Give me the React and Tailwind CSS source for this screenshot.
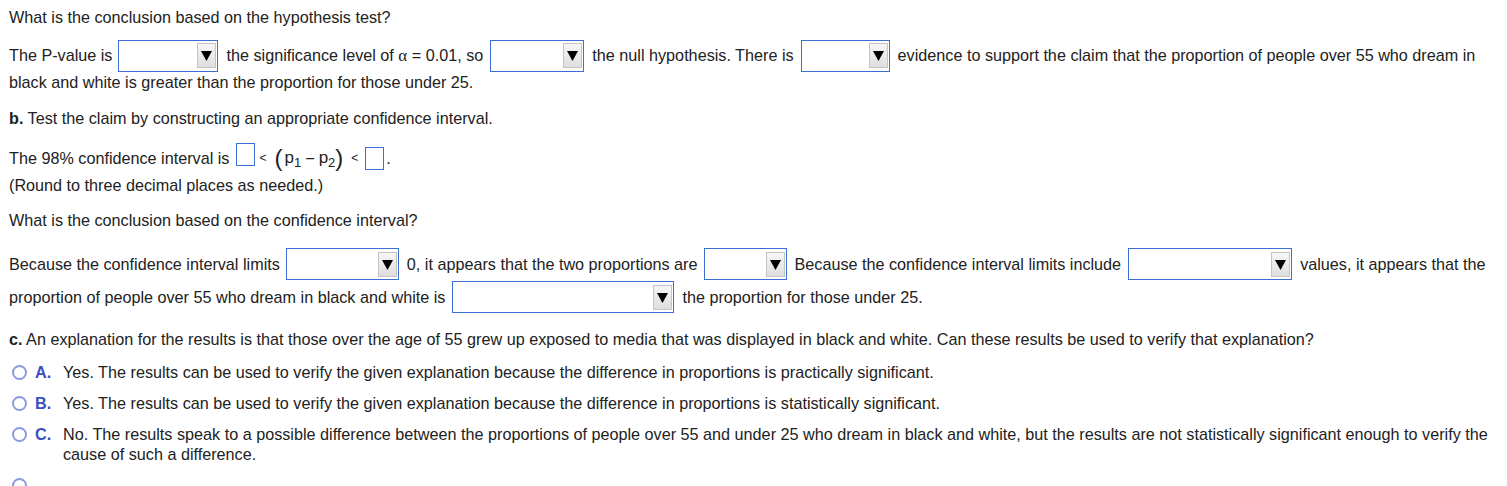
import React from 'react';

const Dropdown = ({ className = '' }) => (
  <span
    className={`relative inline-flex h-[32px] shrink-0 items-center justify-end border border-[#3b6fd4] bg-white pr-[1px] ${className}`}
  >
    <span className="flex h-[25px] w-[19px] items-center justify-center border border-[#c4c4c4] bg-gradient-to-b from-[#f6f6f6] to-[#dedede]">
      <svg width="11" height="11" viewBox="0 0 11 11">
        <polygon points="0,1 11,1 5.5,11" fill="#000" />
      </svg>
    </span>
  </span>
);

const AnswerBox = () => (
  <span className="inline-block h-[23px] w-[19px] shrink-0 border border-[#3b6fd4] bg-white" />
);

const Radio = () => (
  <span className="ml-[3px] mt-[3px] h-[15px] w-[15px] shrink-0 rounded-full border-2 border-[#8d9bdc] bg-white" />
);

const Option = ({ letter, children }) => (
  <div className="flex items-start leading-5">
    <Radio />
    <span className="ml-[8px] w-[28px] shrink-0 font-bold text-[#3c4fc2]">{letter}</span>
    <span>{children}</span>
  </div>
);

export default function App() {
  return (
    <div
      className="h-[486px] overflow-hidden bg-white pl-[9px] pt-[7px] text-[16.2px] text-[#222]"
      style={{ fontFamily: '"Liberation Sans", Arial, sans-serif' }}
    >
      <p className="leading-5">What is the conclusion based on the hypothesis test?</p>

      {/* hypothesis test conclusion */}
      <div className="mt-[12px] flex h-[33px] items-center whitespace-nowrap">
        <span>The P-value is</span>
        <Dropdown className="ml-[6px] mr-[8px] w-[100px]" />
        <span>
          the significance level of{' '}
          <span className="text-[17px]" style={{ fontFamily: '"Liberation Serif", serif' }}>α</span>
          {' '}= 0.01, so
        </span>
        <Dropdown className="ml-[7px] mr-[8px] w-[94px]" />
        <span>the null hypothesis. There is</span>
        <Dropdown className="ml-[7px] mr-[8px] w-[89px]" />
        <span>evidence to support the claim that the proportion of people over 55 who dream in</span>
      </div>
      <p className="whitespace-nowrap leading-5">black and white is greater than the proportion for those under 25.</p>

      <p className="mt-[16px] leading-5">
        <b>b.</b> Test the claim by constructing an appropriate confidence interval.
      </p>

      {/* confidence interval */}
      <div className="mt-[17px] flex h-[26px] items-center whitespace-nowrap">
        <span>The 98% confidence interval is</span>
        <span className="ml-[7px]"><AnswerBox /></span>
        <span className="ml-[4px] text-[12px]">&lt;</span>
        <span className="ml-[8px] flex items-center">
          <span className="text-[24px] leading-none">(</span>
          <span className="ml-[2px] text-[17px]">p<sub className="text-[13px]">1</sub></span>
          <span className="mx-[4px]">−</span>
          <span className="text-[17px]">p<sub className="text-[13px]">2</sub></span>
          <span className="text-[24px] leading-none">)</span>
        </span>
        <span className="ml-[8px] mr-[7px] text-[12px]">&lt;</span>
        <AnswerBox />
        <span className="ml-[2px]">.</span>
      </div>
      <p className="mt-[4px] leading-5">(Round to three decimal places as needed.)</p>

      <p className="mt-[15px] leading-5">What is the conclusion based on the confidence interval?</p>

      <div className="mt-[18px] flex h-[32px] items-center whitespace-nowrap">
        <span>Because the confidence interval limits</span>
        <Dropdown className="ml-[6px] mr-[8px] w-[113px]" />
        <span>0, it appears that the two proportions are</span>
        <Dropdown className="ml-[6px] mr-[8px] w-[83px]" />
        <span>Because the confidence interval limits include</span>
        <Dropdown className="ml-[7px] mr-[8px] w-[164px]" />
        <span>values, it appears that the</span>
      </div>
      <div className="mt-[1px] flex h-[32px] items-center whitespace-nowrap">
        <span>proportion of people over 55 who dream in black and white is</span>
        <Dropdown className="ml-[7px] mr-[8px] w-[222px]" />
        <span>the proportion for those under 25.</span>
      </div>

      <p className="mt-[16px] leading-5">
        <b>c.</b> An explanation for the results is that those over the age of 55 grew up exposed to media that was displayed in black and white. Can these results be used to verify that explanation?
      </p>

      <div className="mt-[13px]">
        <Option letter="A.">
          Yes. The results can be used to verify the given explanation because the difference in proportions is practically significant.
        </Option>
      </div>
      <div className="mt-[11px]">
        <Option letter="B.">
          Yes. The results can be used to verify the given explanation because the difference in proportions is statistically significant.
        </Option>
      </div>
      <div className="mt-[11px]">
        <Option letter="C.">
          No. The results speak to a possible difference between the proportions of people over 55 and under 25 who dream in black and white, but the results are not statistically significant enough to verify the
          <br />
          cause of such a difference.
        </Option>
      </div>
      {/* next option, cut off by the window edge */}
      <div className="mt-[11px] flex">
        <Radio />
      </div>
    </div>
  );
}
